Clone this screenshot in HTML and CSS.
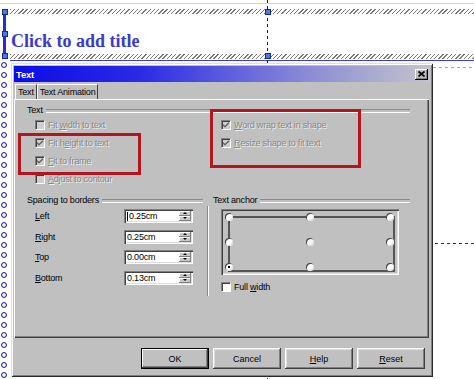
FILE: index.html
```html
<!DOCTYPE html>
<html>
  <head>
    <meta charset="UTF-8" />
    <meta name="viewport" content="width=device-width, initial-scale=1.0" />
    <title>Text</title>

    <link rel="stylesheet" href="styles.css">
  </head>

  <body>
    <div class="slide">
      <div class="slide-top"></div>

      <!-- title placeholder, selected -->
      <div class="placeholder">
        <div class="hatch"></div>
        <div class="title-text">Click to add title</div>
        <div class="hatch"></div>
        <div class="frame-line"></div>
      </div>

      <div class="guide-v"></div>
      <div class="guide-h guide-h-top"></div>
      <div class="guide-h guide-h-mid"></div>
      <div class="left-bar"></div>
      <div class="left-strip"></div>
      <span class="handle handle-1"></span>
      <span class="handle handle-2"></span>
      <span class="handle handle-3"></span>
      <span class="handle handle-4"></span>
      <span class="handle handle-5"></span>

      <div class="dialog">
        <div class="titlebar">
          <span class="title">Text</span>
          <button class="close">
            <svg width="7" height="6" viewBox="0 0 7 6"><path d="M0.5 0.5 6.5 5.5 M6.5 0.5 0.5 5.5" stroke="#000" stroke-width="1.7" /></svg>
          </button>
        </div>

        <div class="tabs">
          <div class="tab active">Text</div>
          <div class="tab">Text Animation</div>
        </div>

        <div class="panel">
          <div class="group">
            <div class="group-head"><span>Text</span></div>
            <div class="cols">
              <div>
                <div class="check off">
                  <span class="box"></span><span>Fit <u>w</u>idth to text</span>
                </div>
                <div class="mark mark-left">
                  <div class="check off">
                    <span class="box"><svg width="8" height="8" viewBox="0 0 8 8"><path d="M1 3.8 3 5.8 7 1.8" fill="none" stroke="#666" stroke-width="1.5" /></svg></span>
                    <span>Fit h<u>e</u>ight to text</span>
                  </div>
                  <div class="check off">
                    <span class="box"><svg width="8" height="8" viewBox="0 0 8 8"><path d="M1 3.8 3 5.8 7 1.8" fill="none" stroke="#666" stroke-width="1.5" /></svg></span>
                    <span><u>F</u>it to frame</span>
                  </div>
                </div>
                <div class="check off">
                  <span class="box"></span><span><u>A</u>djust to contour</span>
                </div>
              </div>

              <div class="mark mark-right">
                <div class="check off">
                  <span class="box"><svg width="8" height="8" viewBox="0 0 8 8"><path d="M1 3.8 3 5.8 7 1.8" fill="none" stroke="#666" stroke-width="1.5" /></svg></span>
                  <span><u>W</u>ord wrap text in shape</span>
                </div>
                <div class="check off">
                  <span class="box"><svg width="8" height="8" viewBox="0 0 8 8"><path d="M1 3.8 3 5.8 7 1.8" fill="none" stroke="#666" stroke-width="1.5" /></svg></span>
                  <span><u>R</u>esize shape to fit text</span>
                </div>
              </div>
            </div>
          </div>

          <div class="lower">
            <div class="group">
              <div class="group-head"><span>Spacing to borders</span></div>
              <div class="spin-row">
                <span><u>L</u>eft</span>
                <div class="field"><span class="caret"></span><span class="val">0.25cm</span><span class="spin"><span class="up"></span><span class="down"></span></span></div>
              </div>
              <div class="spin-row">
                <span><u>R</u>ight</span>
                <div class="field"><span class="val">0.25cm</span><span class="spin"><span class="up"></span><span class="down"></span></span></div>
              </div>
              <div class="spin-row">
                <span><u>T</u>op</span>
                <div class="field"><span class="val">0.00cm</span><span class="spin"><span class="up"></span><span class="down"></span></span></div>
              </div>
              <div class="spin-row">
                <span><u>B</u>ottom</span>
                <div class="field"><span class="val">0.13cm</span><span class="spin"><span class="up"></span><span class="down"></span></span></div>
              </div>
            </div>

            <div class="group">
              <div class="group-head"><span>Text anchor</span></div>
              <div class="anchor-body">
                <div class="anchor-box">
                  <span class="radio"></span><span class="radio"></span><span class="radio"></span>
                  <span class="radio"></span><span class="radio"></span><span class="radio"></span>
                  <span class="radio on"></span><span class="radio"></span><span class="radio"></span>
                </div>
                <div class="check full">
                  <span class="box"></span><span>Full <u>w</u>idth</span>
                </div>
              </div>
            </div>
          </div>
        </div>

        <div class="buttons">
          <button class="btn default">OK</button>
          <button class="btn">Cancel</button>
          <button class="btn"><u>H</u>elp</button>
          <button class="btn"><u>R</u>eset</button>
        </div>
      </div>
    </div>
  </body>
</html>
```

FILE: styles.css
```css
* {
  box-sizing: border-box;
}

body {
  margin: 0;
  background: #fff;
  font-family: "Liberation Sans", Arial, sans-serif;
  font-size: 9px;
  letter-spacing: -0.2px;
  color: #000;
}

u {
  text-decoration-thickness: 1px;
  text-underline-offset: 1px;
}

/* slide behind the dialog */
.slide {
  position: relative;
  width: 474px;
  height: 379px;
  overflow: hidden;
  background: #fff;
}
.slide-top {
  height: 1px;
  margin-top: 3px;
  background: #d4d4d4;
}
.placeholder {
  margin: 5px 0 0 10px;
}
.hatch {
  height: 5px;
  background: repeating-linear-gradient(135deg, #7a7a7a 0 1px, #fff 1px 3px);
}
.title-text {
  height: 40px;
  padding: 17px 0 0 1px;
  font: bold 18px/20px "Liberation Serif", "Times New Roman", serif;
  letter-spacing: 0;
  color: #3a3ad2;
}
.frame-line {
  height: 1px;
  margin-top: 1px;
  background: #3b3be0;
}

.guide-v {
  position: absolute;
  left: 267px;
  top: 0;
  width: 1px;
  height: 100%;
  background: repeating-linear-gradient(to bottom, #222 0 3px, transparent 3px 6px);
}
.guide-h {
  position: absolute;
  right: 0;
  height: 1px;
}
.guide-h-top {
  top: 67px;
  left: 433px;
  background: repeating-linear-gradient(to right, #a8a8a8 0 3px, transparent 3px 6px);
}
.guide-h-mid {
  top: 243px;
  left: 435px;
  background: repeating-linear-gradient(to right, #333 0 3px, transparent 3px 6px);
}
.left-bar {
  position: absolute;
  left: 3px;
  top: 12px;
  width: 3px;
  height: 44px;
  background: #2a2ad8;
}
.left-strip {
  position: absolute;
  left: 0;
  top: 60px;
  bottom: 0;
  width: 8px;
  background: radial-gradient(circle at 4px 5px, transparent 1.4px, #4646c0 2px, #4646c0 2.6px, transparent 3.2px) 0 0 / 8px 10px;
}
.handle {
  position: absolute;
  width: 6px;
  height: 6px;
  background: #4a7ae0;
  border: 1px solid #1a2a90;
}
.handle-1 { left: 2px; top: 9px; }
.handle-2 { left: 2px; top: 31px; }
.handle-3 { left: 2px; top: 53px; }
.handle-4 { left: 265px; top: 9px; }
.handle-5 { left: 265px; top: 53px; }

/* dialog window */
.dialog {
  position: absolute;
  left: 11px;
  top: 63px;
  width: 422px;
  height: 314px;
  padding: 3px;
  display: flex;
  flex-direction: column;
  background: #c0c0c0;
  box-shadow: inset 1px 1px #dfdfdf, inset -1px -1px #2a2a2a, inset 2px 2px #fff, inset -2px -2px #808080;
}
.titlebar {
  height: 16px;
  padding: 0 2px;
  display: flex;
  align-items: center;
  justify-content: space-between;
  background: linear-gradient(to right, #0c0ce8 0%, #2a2ae6 30%, #8a8ad6 70%, #c4c4cc 100%);
}
.title {
  color: #fff;
  font-weight: bold;
  font-size: 9.5px;
}
.close {
  width: 13px;
  height: 11px;
  padding: 0;
  border: 0;
  display: flex;
  align-items: center;
  justify-content: center;
  background: #c0c0c0;
  box-shadow: inset -1px -1px #000, inset 1px 1px #fff, inset -2px -2px #808080;
}

.tabs {
  display: flex;
  height: 15px;
  margin-top: 2px;
  padding-left: 1px;
}
.tab {
  padding: 0 2px;
  line-height: 14px;
  border-top: 1px solid #fff;
  border-left: 1px solid #fff;
  border-right: 1px solid #404040;
}

.panel {
  height: 239px;
  margin-right: 1px;
  padding: 6px 19px 0 13px;
  box-shadow: inset 1px 1px #fff, inset -1px -1px #404040, inset -2px -2px #808080;
}
.group-head {
  display: flex;
  align-items: center;
  gap: 3px;
  height: 11px;
  line-height: 11px;
}
.group-head::after {
  content: "";
  flex: 1;
  height: 2px;
  border-top: 1px solid #8a8a8a;
  border-bottom: 1px solid #fff;
}
.cols,
.lower {
  display: grid;
  grid-template-columns: 176px 1fr;
  column-gap: 10px;
}
.lower {
  margin-top: 7px;
}

.check {
  display: flex;
  align-items: center;
  gap: 3px;
  height: 18px;
  padding-left: 8px;
}
.box {
  width: 10px;
  height: 10px;
  flex: none;
  display: flex;
  align-items: center;
  justify-content: center;
  background: #fff;
  border: 1px solid;
  border-color: #808080 #fff #fff #808080;
  box-shadow: inset 1px 1px #404040;
}
.check.off {
  color: #878787;
  text-shadow: 1px 1px 0 rgba(255, 255, 255, 0.75);
}
.check.off .box {
  background: #cfcfcf;
}
.check.full {
  margin-top: 3px;
  padding-left: 0;
}

/* red highlight frames */
.mark {
  position: relative;
}
.mark::after {
  content: "";
  position: absolute;
  border: 3px solid #b3161f;
}
.mark-left::after {
  left: -9px;
  top: -1px;
  width: 117px;
  height: 36px;
}
.mark-right::after {
  left: -3px;
  top: -7px;
  width: 145px;
  height: 53px;
}

.spin-row {
  display: grid;
  grid-template-columns: 89px 69px;
  align-items: center;
  height: 20.5px;
  padding-left: 8px;
}
.field {
  height: 14px;
  padding: 0 2px 0 3px;
  display: flex;
  align-items: center;
  background: #fff;
  box-shadow: inset 1px 1px #808080, inset 2px 2px #404040, inset -1px -1px #fff, inset -2px -2px #dfdfdf;
}
.field .val {
  flex: 1;
}
.caret {
  width: 1px;
  height: 9px;
  margin-right: 1px;
  background: #000;
}
.spin {
  width: 12px;
  height: 10px;
  display: flex;
  flex-direction: column;
}
.spin span {
  flex: 1;
  position: relative;
  background: #c8c8c8;
  box-shadow: inset -1px -1px #808080, inset 1px 1px #fff;
}
.spin span::after {
  content: "";
  position: absolute;
  left: 4px;
  border-left: 2px solid transparent;
  border-right: 2px solid transparent;
}
.spin .up::after {
  top: 1px;
  border-bottom: 2px solid #000;
}
.spin .down::after {
  top: 1px;
  border-top: 2px solid #000;
}

.anchor-body {
  height: 90px;
  margin-left: -6px;
  padding: 3px 0 0 13px;
  border-left: 1px solid #8a8a8a;
  box-shadow: inset 1px 0 #fff;
}
.anchor-box {
  position: relative;
  width: 178px;
  height: 66px;
  padding: 4px 5px 4px 4px;
  display: grid;
  grid-template-columns: repeat(3, 8px);
  grid-template-rows: repeat(3, 8px);
  justify-content: space-between;
  align-content: space-between;
  box-shadow: inset 1px 1px #808080, inset 2px 2px #404040, inset -1px -1px #fff, inset -2px -2px #dfdfdf;
}
.anchor-box::before {
  content: "";
  position: absolute;
  left: 7px;
  top: 7px;
  width: 163px;
  height: 52px;
  border: 2px solid #555;
}
.radio {
  position: relative;
  width: 8px;
  height: 8px;
  border-radius: 50%;
  background: #fff;
  box-shadow: inset 1px 1px #404040, inset -1px -1px #dfdfdf;
}
.radio:nth-child(5) {
  background: #f4f4f4;
}
.radio.on::after {
  content: "";
  position: absolute;
  left: 3px;
  top: 3px;
  width: 2px;
  height: 2px;
  background: #000;
}

.buttons {
  display: flex;
  justify-content: flex-end;
  gap: 4px;
  margin-top: 10px;
  padding-right: 5px;
}
.btn {
  width: 68px;
  height: 21px;
  padding: 0;
  border: 0;
  font: inherit;
  color: inherit;
  background: #c0c0c0;
  box-shadow: inset -1px -1px #404040, inset 1px 1px #fff, inset -2px -2px #808080, inset 2px 2px #dfdfdf;
}
.btn.default {
  box-shadow: inset 0 0 0 1px #000, inset -2px -2px #404040, inset 2px 2px #fff, inset -3px -3px #808080;
}
```
